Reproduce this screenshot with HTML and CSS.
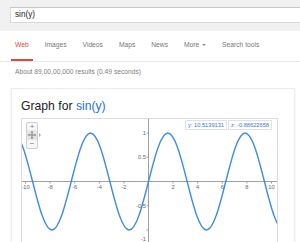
FILE: index.html
```html
<!DOCTYPE html>
<html lang="en">
<head>
	<meta charset="utf-8">
	<title>sin(y) - Search</title>
	<link rel="stylesheet" href="styles.css">
</head>
<body>

<div class="header">
	<div class="searchbox">sin(y)</div>
</div>

<div class="tabs">
	<span class="tab active">Web</span>
	<span class="tab">Images</span>
	<span class="tab">Videos</span>
	<span class="tab">Maps</span>
	<span class="tab">News</span>
	<span class="tab">More <i class="caret"></i></span>
	<span class="tab">Search tools</span>
</div>

<div class="stats">About 89,00,00,000 results (0.49 seconds)</div>

<div class="card">
	<h2 class="card-title">Graph for <span class="query">sin(y)</span></h2>
	<div class="graph">
		<svg class="plot" width="255" height="140" viewBox="0 0 255 140">
			<!-- axes -->
			<line class="axis" x1="0" y1="62.5" x2="255" y2="62.5"/>
			<line class="axis" x1="126.5" y1="0" x2="126.5" y2="140"/>
			<!-- ticks -->
			<path class="tick" d="M3.5,62.5v2 M28.1,62.5v2 M52.7,62.5v2 M77.3,62.5v2 M101.9,62.5v2 M151.1,62.5v2 M175.7,62.5v2 M200.3,62.5v2 M224.9,62.5v2 M249.5,62.5v2 M124.5,14h2 M124.5,38.25h2 M124.5,86.75h2 M124.5,111h2"/>
			<g class="xlabels">
				<text x="3.5" y="69.5">-10</text>
				<text x="28.1" y="69.5">-8</text>
				<text x="52.7" y="69.5">-6</text>
				<text x="77.3" y="69.5">-4</text>
				<text x="101.9" y="69.5">-2</text>
				<text x="151.1" y="69.5">2</text>
				<text x="175.7" y="69.5">4</text>
				<text x="200.3" y="69.5">6</text>
				<text x="224.9" y="69.5">8</text>
				<text x="249.5" y="69.5">10</text>
			</g>
			<g class="ylabels">
				<text x="124" y="16">1</text>
				<text x="124" y="40.3">0.5</text>
				<text x="124" y="88.8">-0.5</text>
				<text x="124" y="122">-1</text>
			</g>
			<!-- the curve -->
			<path class="curve" d="M-28.06,62.5
				c6.30,-24.85 12.33,-48.5 19.32,-48.5 c6.99,0 13.02,23.65 19.32,48.5 c6.30,24.85 12.33,48.5 19.32,48.5 c6.99,0 13.02,-23.65 19.32,-48.5
				c6.30,-24.85 12.33,-48.5 19.32,-48.5 c6.99,0 13.02,23.65 19.32,48.5 c6.30,24.85 12.33,48.5 19.32,48.5 c6.99,0 13.02,-23.65 19.32,-48.5
				c6.30,-24.85 12.33,-48.5 19.32,-48.5 c6.99,0 13.02,23.65 19.32,48.5 c6.30,24.85 12.33,48.5 19.32,48.5 c6.99,0 13.02,-23.65 19.32,-48.5
				c6.30,-24.85 12.33,-48.5 19.32,-48.5 c6.99,0 13.02,23.65 19.32,48.5 c6.30,24.85 12.33,48.5 19.32,48.5 c6.99,0 13.02,-23.65 19.32,-48.5"/>
		</svg>

		<div class="readout">
			<span class="value">y: 10.5139131</span>
			<span class="value">z: -0.88622658</span>
		</div>

		<div class="zoomctl">
			<div class="zbtn zplus">+</div>
			<div class="zbtn zpan">
				<svg width="8" height="8" viewBox="0 0 8 8">
					<path d="M4,0.5v7 M0.5,4h7" stroke="#888" stroke-width="1"/>
					<path d="M4,0 l-1.5,1.5h3z M4,8 l-1.5,-1.5h3z M0,4 l1.5,-1.5v3z M8,4 l-1.5,-1.5v3z" fill="#888"/>
				</svg>
			</div>
			<div class="zbtn zminus">&minus;</div>
			<i class="zarrow"></i>
		</div>
	</div>
</div>

</body>
</html>
```

FILE: styles.css
```css
html, body {
	margin: 0;
	overflow: hidden;
	background: #fff;
}
body {
	font-family: "Liberation Sans", Arial, sans-serif;
	width: 300px;
	height: 242px;
}

.header {
	height: 31px;
	background: #f1f1f1;
	padding-top: 7px;
	box-sizing: border-box;
	overflow: hidden;
}
.searchbox {
	margin-left: 10px;
	width: 310px;
	height: 15.5px;
	box-sizing: border-box;
	border: 1px solid #d9d9d9;
	border-top-color: #c6c6c6;
	background: #fff;
	font-size: 8.2px;
	line-height: 13.5px;
	padding-left: 4px;
	color: #222;
}

.tabs {
	display: flex;
	gap: 8px;
	padding-left: 11px;
	height: 30px;
	border-bottom: 1px solid #ebebeb;
}
.tab {
	padding: 0 4px;
	font-size: 6.7px;
	line-height: 28px;
	color: #777;
	border-bottom: 2px solid transparent;
	white-space: nowrap;
}
.tab.active {
	color: #dd4b39;
	border-bottom-color: #dd4b39;
}
.caret {
	display: inline-block;
	margin-left: 1px;
	vertical-align: middle;
	border-left: 2px solid transparent;
	border-right: 2px solid transparent;
	border-top: 2.5px solid #909090;
}

.stats {
	padding-left: 15px;
	margin-top: 5px;
	font-size: 6.7px;
	line-height: 10px;
	color: #808080;
}

.card {
	margin: 11px 0 0 11px;
	width: 284px;
	box-sizing: border-box;
	border: 1px solid #ececec;
	box-shadow: 0 1px 2px rgba(0, 0, 0, 0.08);
	padding: 0 0 0 9px;
	background: #fff;
}
.card-title {
	margin: 0;
	padding-top: 9px;
	font-size: 12.2px;
	line-height: 16px;
	font-weight: normal;
	color: #222;
}
.query {color: #1a73e8; color: #2a6fdb;}

.graph {
	position: relative;
	margin-top: 4px;
	width: 257px;
	height: 142px;
	box-sizing: border-box;
	border: 1px solid #dcdcdc;
	overflow: hidden;
}
.plot {display: block;}
.axis {stroke: #a0a0a0; stroke-width: 1;}
.tick {stroke: #a0a0a0; stroke-width: 1;}
.xlabels, .ylabels {
	font-family: "Liberation Sans", Arial, sans-serif;
	font-size: 5.7px;
	fill: #666;
}
.xlabels {text-anchor: middle;}
.ylabels {text-anchor: end;}
.curve {
	fill: none;
	stroke: #3f8be6;
	stroke-width: 1.4;
}

.readout {
	position: absolute;
	top: 1px;
	right: 5px;
	display: flex;
}
.value {
	border: 1px solid #e2e2e2;
	background: #fff;
	font-size: 5.7px;
	line-height: 8px;
	padding: 0 2px;
	color: #3c78d8;
	white-space: nowrap;
}
.value + .value {margin-left: 1px;}

.zoomctl {
	position: absolute;
	left: 4px;
	top: 3px;
	width: 10px;
	border: 1px solid #cfcfcf;
	border-radius: 2px;
	background: #f7f7f7;
}
.zbtn {
	text-align: center;
	color: #777;
	font-size: 8px;
	line-height: 7px;
	height: 7px;
}
.zpan {
	height: 10px;
	background: #e6e6e6;
	display: flex;
	align-items: center;
	justify-content: center;
}
.zminus {height: 8px; line-height: 8px;}
.zarrow {
	position: absolute;
	left: 12px;
	top: 10px;
	border-top: 2px solid transparent;
	border-bottom: 2px solid transparent;
	border-left: 2px solid #aaa;
}
```
